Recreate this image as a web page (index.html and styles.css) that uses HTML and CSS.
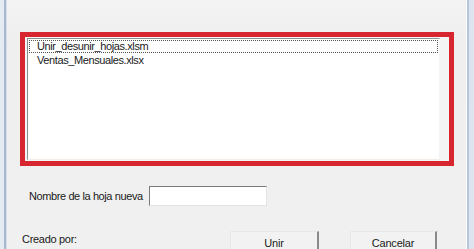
FILE: index.html
```html
<!DOCTYPE html>
<html lang="es">
<head>
<meta charset="utf-8">
<link rel="stylesheet" href="styles.css">
</head>
<body>
<div class="window">
  <div class="edge edge-left"></div>
  <div class="content">
    <div class="frame">
      <div class="listbox">
        <div class="item item-focus">Unir_desunir_hojas.xlsm</div>
        <div class="item">Ventas_Mensuales.xlsx</div>
      </div>
    </div>
    <div class="form-row">
      <span class="label">Nombre de la hoja nueva</span>
      <div class="textbox"></div>
    </div>
    <div class="bottom-row">
      <span class="credit">Creado por:</span>
      <div class="btn btn-unir">Unir</div>
      <div class="btn btn-cancel">Cancelar</div>
    </div>
  </div>
  <div class="edge edge-right"></div>
</div>
</body>
</html>
```
FILE: styles.css
```css
html, body {
  margin: 0;
  padding: 0;
  width: 474px;
  height: 249px;
  overflow: hidden;
  background: #f0f0f0;
  font-family: "Liberation Sans", Arial, sans-serif;
  font-size: 11px;
  color: #1a1a1a;
}
.window {
  display: flex;
  height: 249px;
}
.edge {
  flex: none;
  height: 100%;
}
.edge-left {
  width: 7px;
  background: linear-gradient(to right, #e4ebf3 0, #e4ebf3 4px, #a8b9cf 4px, #a8b9cf 6px, #d6dfea 6px);
}
.edge-right {
  width: 8px;
  background: linear-gradient(to right, #ffffff 0, #ffffff 1px, #b6c6da 1px, #b6c6da 3px, #dbe4ef 3px);
}
.content {
  flex: 1;
  display: flex;
  flex-direction: column;
  background: linear-gradient(to bottom, #f3f3f3 0, #efefef 40px, #f0f0f0 100%);
}
.frame {
  margin: 32px 12px 0 13px;
  border: 5px solid #d7262f;
  height: 124px;
  padding: 1px 9px 1px 2px;
  background: #f4f4f4;
}
.listbox {
  height: 122px;
  box-sizing: border-box;
  background: #fff;
  border-top: 1px solid #8e8f8f;
  border-left: 1px solid #8e8f8f;
  border-right: 1px solid #f4f4f4;
  border-bottom: 1px solid #f4ece6;
  padding: 1px;
}
.item {
  height: 12px;
  line-height: 12px;
  padding-left: 7px;
  border: 1px solid transparent;
  white-space: nowrap;
  letter-spacing: -0.4px;
}
.item-focus {
  border: 1px dotted #555;
  height: 11px;
  line-height: 11px;
}
.form-row {
  display: flex;
  align-items: center;
  margin: 20px 0 0 22px;
  height: 20px;
}
.label {
  flex: none;
  width: 120px;
  white-space: nowrap;
  letter-spacing: -0.4px;
}
.textbox {
  flex: none;
  width: 116px;
  height: 18px;
  background: #fff;
  border-top: 1px solid #7a7a7a;
  border-left: 1px solid #7a7a7a;
  border-right: 1px solid #e3e3e3;
  border-bottom: 1px solid #e3e3e3;
}
.bottom-row {
  display: flex;
  align-items: flex-start;
  margin: 25px 0 0 15px;
}
.credit {
  flex: none;
  width: 208px;
  padding-top: 2px;
  letter-spacing: -0.3px;
}
.btn {
  height: 24px;
  box-sizing: border-box;
  text-align: center;
  padding-top: 5px;
  background: #f2f2f2;
  border-top: 1px solid #e8e8e8;
  border-left: 1px solid #e8e8e8;
  border-right: 2px solid #8a8a8a;
  flex: none;
  letter-spacing: -0.2px;
}
.btn-unir {
  width: 89px;
}
.btn-cancel {
  width: 87px;
  margin-left: 31px;
}
```
